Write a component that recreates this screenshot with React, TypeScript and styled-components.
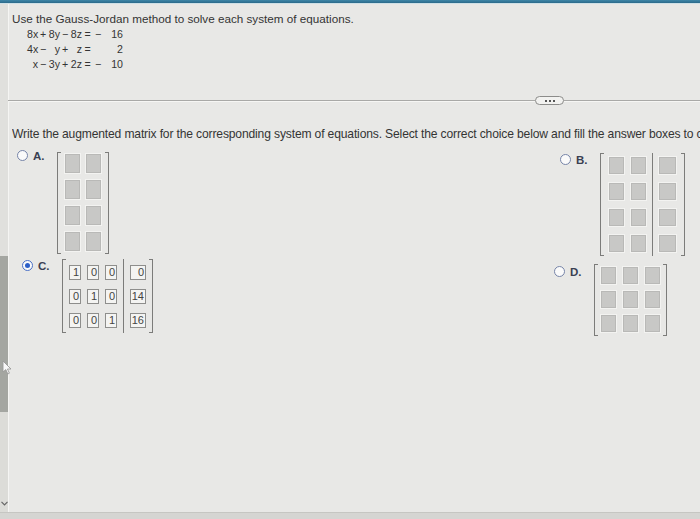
import React, { FC } from 'react';
import styled, { createGlobalStyle } from 'styled-components';

const GlobalStyle = createGlobalStyle`
  html, body {
    margin: 0;
    padding: 0;
    background: #e8e8e6;
  }
  * {
    box-sizing: border-box;
  }
`;

const Screen = styled.div`
  position: relative;
  width: 700px;
  height: 519px;
  overflow: hidden;
  display: flex;
  flex-direction: column;
  background: #e8e8e6;
  font-family: 'Liberation Sans', Arial, sans-serif;
  color: #343434;
`;

const TopBar = styled.div`
  height: 4px;
  flex: 0 0 4px;
  background: linear-gradient(to bottom, #3f86a8, #2b6a8a);
  border-bottom: 1px solid #cfe0e6;
`;

const Body = styled.div`
  flex: 1;
  display: flex;
  min-height: 0;
`;

const ScrollTrack = styled.div`
  width: 9px;
  flex: 0 0 9px;
  display: flex;
  flex-direction: column;
  align-items: stretch;
  padding-top: 252px;
  background: #e0e0dd;
  border-right: 1px solid #f5f5f3;
`;

const Thumb = styled.div`
  height: 156px;
  background: #a4a6a1;
`;

const TrackRest = styled.div`
  flex: 1;
  background: #dcdcd8;
  display: flex;
  align-items: flex-end;
  justify-content: center;
  padding-bottom: 6px;
`;

const BottomEdge = styled.div`
  height: 7px;
  flex: 0 0 7px;
  background: #d5d5d2;
  border-top: 1px solid #c6c6c2;
`;

const Content = styled.div`
  flex: 1;
  min-width: 0;
  padding: 7px 0 0 3px;
`;

const Prompt = styled.div`
  font-size: 11.7px;
  line-height: 16px;
  white-space: nowrap;
`;

const System = styled.div`
  display: grid;
  grid-template-columns: 11px 10px 12px 10px 12px 11px 11px 19px;
  margin-left: 15px;
  font-size: 10.6px;
  line-height: 15px;
  width: 96px;
`;

const Term = styled.span`
  text-align: right;
  white-space: nowrap;
`;

const Op = styled.span`
  text-align: center;
`;

const Sign = styled.span`
  text-align: left;
  padding-left: 2px;
`;

const Divider = styled.div`
  display: flex;
  align-items: center;
  height: 9px;
  margin: 24px 0 0 -4px;
`;

const Rule = styled.div<{ $grow?: boolean }>`
  flex: ${({ $grow }) => ($grow ? '1' : '0 0 136px')};
  height: 2px;
  border-top: 1px solid #a9a9a7;
  border-bottom: 1px solid #f6f6f4;
`;

const Pill = styled.div`
  width: 29px;
  height: 9px;
  border: 1px solid #8c8c8a;
  border-radius: 5px;
  background: #f2f2f0;
  display: flex;
  align-items: center;
  justify-content: center;
  gap: 2px;
`;

const Dot = styled.span`
  width: 2px;
  height: 2px;
  background: #555;
`;

const Instruction = styled.div`
  margin-top: 21px;
  font-size: 12.1px;
  line-height: 16px;
  white-space: nowrap;
  letter-spacing: -0.15px;
  overflow: hidden;
`;

const ChoiceRow = styled.div<{ $split: number; $top: number }>`
  display: grid;
  grid-template-columns: ${({ $split }) => $split}px 1fr;
  align-items: start;
  margin-top: ${({ $top }) => $top}px;
`;

const Choice = styled.div<{ $inset?: number; $drop?: number }>`
  display: flex;
  align-items: flex-start;
  padding-left: ${({ $inset }) => $inset ?? 0}px;
  margin-top: ${({ $drop }) => $drop ?? 0}px;
`;

const Radio = styled.span<{ $checked?: boolean }>`
  width: 11px;
  height: 11px;
  flex: 0 0 11px;
  border-radius: 50%;
  border: 1.5px solid ${({ $checked }) => ($checked ? '#4a70c6' : '#7684a8')};
  background: #fafafa;
  display: flex;
  align-items: center;
  justify-content: center;
  &::after {
    content: '';
    width: 5px;
    height: 5px;
    border-radius: 50%;
    background: ${({ $checked }) => ($checked ? '#2c5fc8' : 'transparent')};
  }
`;

const Letter = styled.span`
  margin-left: 5px;
  font-size: 11.5px;
  line-height: 12px;
  font-weight: bold;
  color: #3a3f52;
  width: 24px;
`;

const Matrix = styled.div<{ $drop: number }>`
  display: flex;
  align-items: stretch;
  margin-top: ${({ $drop }) => $drop}px;
`;

const Bracket = styled.div<{ $side: 'left' | 'right' }>`
  width: 4px;
  border: 1.5px solid #7c7c7a;
  ${({ $side }) => ($side === 'left' ? 'border-right: none;' : 'border-left: none;')}
`;

const Bar = styled.div`
  width: 1px;
  background: #7c7c7a;
  margin: 0 6px;
`;

const Cells = styled.div<{
  $cols: number;
  $w: number;
  $h: number;
  $gx: number;
  $gy: number;
  $pad: string;
}>`
  display: grid;
  grid-template-columns: repeat(${({ $cols }) => $cols}, ${({ $w }) => $w}px);
  grid-auto-rows: ${({ $h }) => $h}px;
  column-gap: ${({ $gx }) => $gx}px;
  row-gap: ${({ $gy }) => $gy}px;
  padding: ${({ $pad }) => $pad};
`;

const EmptyBox = styled.span`
  background: #c8c8c6;
  border: 1px solid #b9b9b7;
  box-shadow: 0 0 0 1px #f3f3f1;
`;

const ValueBox = styled.span`
  background: #f4f4f2;
  border: 1px solid #8e8e8c;
  font-size: 11px;
  line-height: 13px;
  color: #444;
  text-align: right;
  padding-right: 1px;
`;

const Cursor = styled.svg`
  position: absolute;
  left: 2px;
  top: 360px;
`;

type EmptyProps = {
  rows: number;
  cols: number;
  aug?: boolean;
  w: number;
  h: number;
  gx: number;
  gy: number;
  pad: [number, number, number, number];
  drop: number;
};

const px = (p: number[]) => p.map((v) => `${v}px`).join(' ');

const EmptyMatrix: FC<EmptyProps> = ({ rows, cols, aug, w, h, gx, gy, pad, drop }) => {
  const fill = (n: number) => Array.from({ length: n }, (_, i) => <EmptyBox key={i} />);
  const [t, r, b, l] = pad;
  return (
    <Matrix $drop={drop}>
      <Bracket $side="left" />
      <Cells $cols={cols} $w={w} $h={h} $gx={gx} $gy={gy} $pad={px([t, aug ? 0 : r, b, l])}>
        {fill(rows * cols)}
      </Cells>
      {aug && (
        <>
          <Bar />
          <Cells $cols={1} $w={17} $h={h} $gx={gx} $gy={gy} $pad={px([t, r, b, 0])}>
            {fill(rows)}
          </Cells>
        </>
      )}
      <Bracket $side="right" />
    </Matrix>
  );
};

const coef = [
  ['1', '0', '0'],
  ['0', '1', '0'],
  ['0', '0', '1'],
];
const rhs = ['0', '14', '16'];

const App: FC = () => {
  return (
    <>
      <GlobalStyle />
      <Screen>
        <TopBar />
        <Body>
          <ScrollTrack>
            <Thumb />
            <TrackRest>
              <svg width="7" height="5" viewBox="0 0 7 5">
                <polyline points="0.5,0.8 3.5,3.8 6.5,0.8" fill="none" stroke="#666" strokeWidth="1.2" />
              </svg>
            </TrackRest>
          </ScrollTrack>
          <Content>
            <Prompt>Use the Gauss-Jordan method to solve each system of equations.</Prompt>
            <System>
              <Term>8x</Term><Op>+</Op><Term>8y</Term><Op>−</Op><Term>8z</Term><Op>=</Op><Sign>−</Sign><Term>16</Term>
              <Term>4x</Term><Op>−</Op><Term>y</Term><Op>+</Op><Term>z</Term><Op>=</Op><Sign /><Term>2</Term>
              <Term>x</Term><Op>−</Op><Term>3y</Term><Op>+</Op><Term>2z</Term><Op>=</Op><Sign>−</Sign><Term>10</Term>
            </System>
            <Divider>
              <Rule $grow />
              <Pill>
                <Dot />
                <Dot />
                <Dot />
              </Pill>
              <Rule />
            </Divider>
            <Instruction>
              Write the augmented matrix for the corresponding system of equations. Select the correct choice below and fill the answer boxes to complete your choice.
            </Instruction>

            <ChoiceRow $split={548} $top={8}>
              <Choice $inset={5}>
                <Radio />
                <Letter>A.</Letter>
                <EmptyMatrix rows={4} cols={2} w={15} h={19} gx={6} gy={7} pad={[2, 4, 3, 4]} drop={2} />
              </Choice>
              <Choice $drop={4}>
                <Radio />
                <Letter>B.</Letter>
                <EmptyMatrix rows={4} cols={2} aug w={15} h={17} gx={7} gy={9} pad={[4, 5, 4, 5]} drop={-1} />
              </Choice>
            </ChoiceRow>

            <ChoiceRow $split={542} $top={4}>
              <Choice $inset={10}>
                <Radio $checked />
                <Letter>C.</Letter>
                <Matrix $drop={-1}>
                  <Bracket $side="left" />
                  <Cells $cols={3} $w={12} $h={15} $gx={6} $gy={9} $pad="6px 0 5px 3px">
                    {coef.flat().map((v, i) => (
                      <ValueBox key={i}>{v}</ValueBox>
                    ))}
                  </Cells>
                  <Bar />
                  <Cells $cols={1} $w={16} $h={15} $gx={6} $gy={9} $pad="6px 3px 5px 0">
                    {rhs.map((v, i) => (
                      <ValueBox key={i}>{v}</ValueBox>
                    ))}
                  </Cells>
                  <Bracket $side="right" />
                </Matrix>
              </Choice>
              <Choice $drop={6}>
                <Radio />
                <Letter>D.</Letter>
                <EmptyMatrix rows={3} cols={3} w={15} h={17} gx={7} gy={7} pad={[3, 3, 4, 3]} drop={-2} />
              </Choice>
            </ChoiceRow>
          </Content>
        </Body>
        <BottomEdge />
        <Cursor width="10" height="15" viewBox="0 0 10 15">
          <path d="M1 1 L1 12 L3.8 9.6 L5.8 14 L7.4 13.2 L5.5 9 L9 9 Z" fill="#f8f8f8" stroke="#9a9a98" strokeWidth="0.9" />
        </Cursor>
      </Screen>
    </>
  );
};

export default App;
